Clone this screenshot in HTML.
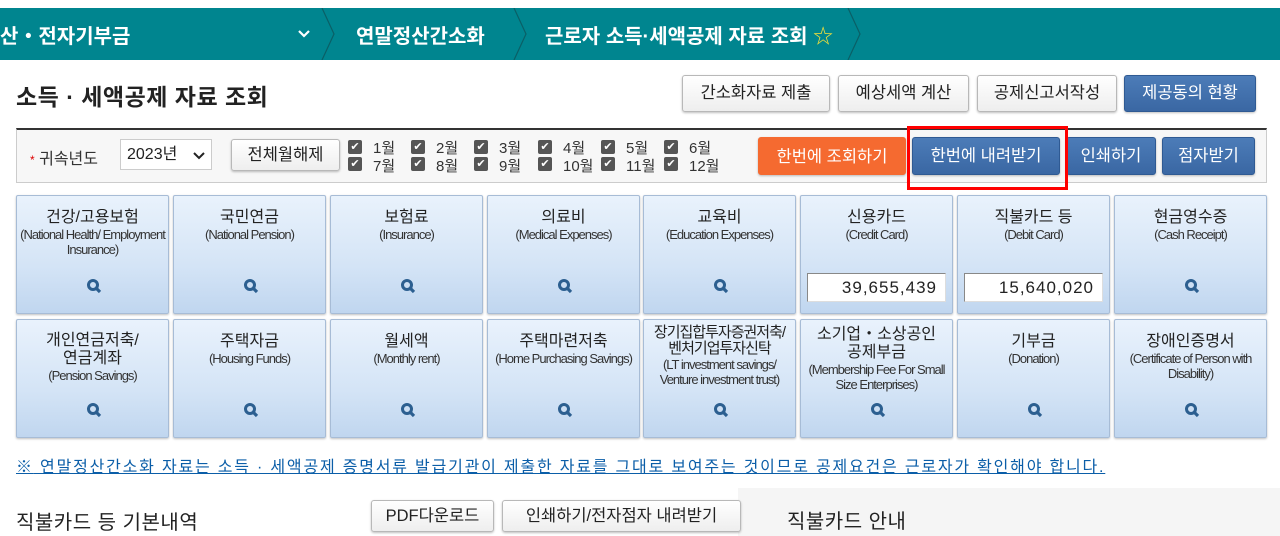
<!DOCTYPE html>
<html><head><meta charset="utf-8"><style>
*{box-sizing:border-box;margin:0;padding:0}
body{width:1280px;height:536px;overflow:hidden;background:#fff;font-family:"Liberation Sans","Noto Sans CJK KR","NanumGothic",sans-serif;color:#222;position:relative}
.a{position:absolute}
.bar{left:0;top:8px;width:1280px;height:52px;background:#00858f}
.bt{color:#fff;font-weight:bold;font-size:20px;top:20px;white-space:nowrap}
.btn{position:absolute;border:1px solid #b8b8b8;border-radius:3px;background:linear-gradient(#fff,#eee);box-shadow:0 1px 2px rgba(0,0,0,.25);font-size:16.5px;text-align:center;white-space:nowrap;color:#222}
.blue{background:linear-gradient(#4c7cb8,#3a67a3);border-color:#2f5a93;color:#fff}
.org{background:#f56a30;border-color:#f56a30;color:#fff}
.tile{position:absolute;width:153px;height:119px;border:1px solid #a7bcd6;border-radius:2px;background:linear-gradient(#e9f2fc,#d4e4f6 60%,#c0d6ef);box-shadow:0 1px 2px rgba(0,0,0,.25);text-align:center}
.tile .k{font-size:16px;color:#222;margin-top:13px;line-height:18px}
.tile .e{font-size:13px;color:#333;letter-spacing:-1px;line-height:15px}
.mag{position:absolute;left:69px;bottom:19px;width:16px;height:16px}
.cb{position:absolute;width:14px;height:14px;background:#555;border-radius:2px;color:#fff;font-size:11px;line-height:14px;text-align:center}
.ml{position:absolute;font-size:15px;color:#333}
.num{position:absolute;left:6px;top:77px;width:139px;height:29px;background:#fff;border:1px solid #888;border-right-color:#ddd;border-bottom-color:#ddd;font-size:17px;text-align:right;padding-right:8px;line-height:27px;letter-spacing:1px}
</style></head><body>
<div class="a bar"></div>
<div class="a bt" style="left:0">산・전자기부금</div>
<svg class="a" style="left:297px;top:29px" width="14" height="10"><path d="M2 2L7 7L12 2" stroke="#fff" stroke-width="2.2" fill="none"/></svg>
<svg class="a" style="left:320px;top:8px" width="20" height="52"><path d="M2 0 L14 26 L2 52" stroke="#0a5f66" fill="none" stroke-width="1.2"/></svg>
<div class="a bt" style="left:356px">연말정산간소화</div>
<svg class="a" style="left:512px;top:8px" width="20" height="52"><path d="M2 0 L14 26 L2 52" stroke="#0a5f66" fill="none" stroke-width="1.2"/></svg>
<div class="a bt" style="left:545px">근로자 소득·세액공제 자료 조회 <span style="color:#f5e13a;font-weight:normal">☆</span></div>
<svg class="a" style="left:846px;top:8px" width="20" height="52"><path d="M2 0 L14 26 L2 52" stroke="#0a5f66" fill="none" stroke-width="1.2"/></svg>

<div class="a" style="left:16px;top:78px;font-size:23px;font-weight:bold;color:#222;letter-spacing:0.5px">소득 · 세액공제 자료 조회</div>
<div class="btn" style="left:682px;top:75px;width:148px;height:37px;line-height:35px">간소화자료 제출</div>
<div class="btn" style="left:838px;top:75px;width:131px;height:37px;line-height:35px">예상세액 계산</div>
<div class="btn" style="left:977px;top:75px;width:140px;height:37px;line-height:35px">공제신고서작성</div>
<div class="btn blue" style="left:1124px;top:75px;width:132px;height:37px;line-height:35px">제공동의 현황</div>

<div class="a" style="left:16px;top:128px;width:1251px;height:55px;background:#f7f7f7;border:1px solid #ccc;border-top:2px solid #333"></div>
<div class="a" style="left:30px;top:145px;font-size:16px;color:#333"><span style="color:#d00;font-size:12px">*</span> 귀속년도</div>
<div class="a" style="left:120px;top:139px;width:92px;height:31px;border:1px solid #ccc;background:#fff;font-size:16px;line-height:29px;padding-left:6px">2023년<svg style="position:absolute;right:6px;top:11px" width="12" height="9"><path d="M1 2L6 7L11 2" stroke="#222" stroke-width="2" fill="none"/></svg></div>
<div class="btn" style="left:231px;top:139px;width:109px;height:32px;line-height:30px">전체월해제</div>
<div class="cb" style="left:348px;top:140px">✔</div><div class="ml" style="left:373px;top:137px">1월</div>
<div class="cb" style="left:348px;top:157px">✔</div><div class="ml" style="left:373px;top:155px">7월</div>
<div class="cb" style="left:411px;top:140px">✔</div><div class="ml" style="left:436px;top:137px">2월</div>
<div class="cb" style="left:411px;top:157px">✔</div><div class="ml" style="left:436px;top:155px">8월</div>
<div class="cb" style="left:474px;top:140px">✔</div><div class="ml" style="left:499px;top:137px">3월</div>
<div class="cb" style="left:474px;top:157px">✔</div><div class="ml" style="left:499px;top:155px">9월</div>
<div class="cb" style="left:538px;top:140px">✔</div><div class="ml" style="left:563px;top:137px">4월</div>
<div class="cb" style="left:538px;top:157px">✔</div><div class="ml" style="left:563px;top:155px">10월</div>
<div class="cb" style="left:601px;top:140px">✔</div><div class="ml" style="left:626px;top:137px">5월</div>
<div class="cb" style="left:601px;top:157px">✔</div><div class="ml" style="left:626px;top:155px">11월</div>
<div class="cb" style="left:664px;top:140px">✔</div><div class="ml" style="left:689px;top:137px">6월</div>
<div class="cb" style="left:664px;top:157px">✔</div><div class="ml" style="left:689px;top:155px">12월</div>
<div class="btn org" style="left:758px;top:137px;width:148px;height:38px;line-height:38px">한번에 조회하기</div>
<div class="btn blue" style="left:912px;top:137px;width:148px;height:38px;line-height:36px">한번에 내려받기</div>
<div class="btn blue" style="left:1066px;top:137px;width:90px;height:38px;line-height:36px">인쇄하기</div>
<div class="btn blue" style="left:1162px;top:137px;width:93px;height:38px;line-height:36px">점자받기</div>
<div class="a" style="left:907px;top:126px;width:161px;height:64px;border:3px solid #f00"></div>

<div class="tile" style="left:16px;top:195px"><div class="k">건강/고용보험</div><div class="e">(National Health/ Employment Insurance)</div><svg class="mag" viewBox="0 0 16 16"><circle cx="7" cy="7" r="4.5" stroke="#2c5f90" stroke-width="3" fill="none"/><path d="M10 10L14 14" stroke="#2c5f90" stroke-width="3.2"/></svg></div>
<div class="tile" style="left:173px;top:195px"><div class="k">국민연금</div><div class="e">(National Pension)</div><svg class="mag" viewBox="0 0 16 16"><circle cx="7" cy="7" r="4.5" stroke="#2c5f90" stroke-width="3" fill="none"/><path d="M10 10L14 14" stroke="#2c5f90" stroke-width="3.2"/></svg></div>
<div class="tile" style="left:330px;top:195px"><div class="k">보험료</div><div class="e">(Insurance)</div><svg class="mag" viewBox="0 0 16 16"><circle cx="7" cy="7" r="4.5" stroke="#2c5f90" stroke-width="3" fill="none"/><path d="M10 10L14 14" stroke="#2c5f90" stroke-width="3.2"/></svg></div>
<div class="tile" style="left:487px;top:195px"><div class="k">의료비</div><div class="e">(Medical Expenses)</div><svg class="mag" viewBox="0 0 16 16"><circle cx="7" cy="7" r="4.5" stroke="#2c5f90" stroke-width="3" fill="none"/><path d="M10 10L14 14" stroke="#2c5f90" stroke-width="3.2"/></svg></div>
<div class="tile" style="left:643px;top:195px"><div class="k">교육비</div><div class="e">(Education Expenses)</div><svg class="mag" viewBox="0 0 16 16"><circle cx="7" cy="7" r="4.5" stroke="#2c5f90" stroke-width="3" fill="none"/><path d="M10 10L14 14" stroke="#2c5f90" stroke-width="3.2"/></svg></div>
<div class="tile" style="left:800px;top:195px"><div class="k">신용카드</div><div class="e">(Credit Card)</div><div class="num">39,655,439</div></div>
<div class="tile" style="left:957px;top:195px"><div class="k">직불카드 등</div><div class="e">(Debit Card)</div><div class="num">15,640,020</div></div>
<div class="tile" style="left:1114px;top:195px"><div class="k">현금영수증</div><div class="e">(Cash Receipt)</div><svg class="mag" viewBox="0 0 16 16"><circle cx="7" cy="7" r="4.5" stroke="#2c5f90" stroke-width="3" fill="none"/><path d="M10 10L14 14" stroke="#2c5f90" stroke-width="3.2"/></svg></div>

<div class="tile" style="left:16px;top:319px"><div class="k" style="margin-top:12px">개인연금저축/<br>연금계좌</div><div class="e">(Pension Savings)</div><svg class="mag" viewBox="0 0 16 16"><circle cx="7" cy="7" r="4.5" stroke="#2c5f90" stroke-width="3" fill="none"/><path d="M10 10L14 14" stroke="#2c5f90" stroke-width="3.2"/></svg></div>
<div class="tile" style="left:173px;top:319px"><div class="k">주택자금</div><div class="e">(Housing Funds)</div><svg class="mag" viewBox="0 0 16 16"><circle cx="7" cy="7" r="4.5" stroke="#2c5f90" stroke-width="3" fill="none"/><path d="M10 10L14 14" stroke="#2c5f90" stroke-width="3.2"/></svg></div>
<div class="tile" style="left:330px;top:319px"><div class="k">월세액</div><div class="e">(Monthly rent)</div><svg class="mag" viewBox="0 0 16 16"><circle cx="7" cy="7" r="4.5" stroke="#2c5f90" stroke-width="3" fill="none"/><path d="M10 10L14 14" stroke="#2c5f90" stroke-width="3.2"/></svg></div>
<div class="tile" style="left:487px;top:319px"><div class="k">주택마련저축</div><div class="e">(Home Purchasing Savings)</div><svg class="mag" viewBox="0 0 16 16"><circle cx="7" cy="7" r="4.5" stroke="#2c5f90" stroke-width="3" fill="none"/><path d="M10 10L14 14" stroke="#2c5f90" stroke-width="3.2"/></svg></div>
<div class="tile" style="left:643px;top:319px"><div class="k" style="margin-top:5px;font-size:15px;letter-spacing:-1px;line-height:16px">장기집합투자증권저축/<br>벤처기업투자신탁</div><div class="e">(LT investment savings/ Venture investment trust)</div><svg class="mag" viewBox="0 0 16 16"><circle cx="7" cy="7" r="4.5" stroke="#2c5f90" stroke-width="3" fill="none"/><path d="M10 10L14 14" stroke="#2c5f90" stroke-width="3.2"/></svg></div>
<div class="tile" style="left:800px;top:319px"><div class="k" style="margin-top:6px">소기업・소상공인<br>공제부금</div><div class="e">(Membership Fee For Small Size Enterprises)</div><svg class="mag" viewBox="0 0 16 16"><circle cx="7" cy="7" r="4.5" stroke="#2c5f90" stroke-width="3" fill="none"/><path d="M10 10L14 14" stroke="#2c5f90" stroke-width="3.2"/></svg></div>
<div class="tile" style="left:957px;top:319px"><div class="k">기부금</div><div class="e">(Donation)</div><svg class="mag" viewBox="0 0 16 16"><circle cx="7" cy="7" r="4.5" stroke="#2c5f90" stroke-width="3" fill="none"/><path d="M10 10L14 14" stroke="#2c5f90" stroke-width="3.2"/></svg></div>
<div class="tile" style="left:1114px;top:319px"><div class="k">장애인증명서</div><div class="e">(Certificate of Person with Disability)</div><svg class="mag" viewBox="0 0 16 16"><circle cx="7" cy="7" r="4.5" stroke="#2c5f90" stroke-width="3" fill="none"/><path d="M10 10L14 14" stroke="#2c5f90" stroke-width="3.2"/></svg></div>

<div class="a" style="left:16px;top:453px;font-size:16px;color:#0b5ea8;text-decoration:underline;white-space:nowrap;letter-spacing:1.8px"><b>※</b> 연말정산간소화 자료는 소득 · 세액공제 증명서류 발급기관이 제출한 자료를 그대로 보여주는 것이므로 공제요건은 근로자가 확인해야 합니다.</div>

<div class="a" style="left:738px;top:488px;width:542px;height:48px;background:#f5f5f5"></div>
<div class="a" style="left:787px;top:505px;font-size:20px;color:#222;letter-spacing:0.5px">직불카드 안내</div>
<div class="a" style="left:16px;top:506px;font-size:20px;color:#222;letter-spacing:0.5px">직불카드 등 기본내역</div>
<div class="btn" style="left:371px;top:500px;width:123px;height:32px;line-height:30px">PDF다운로드</div>
<div class="btn" style="left:502px;top:500px;width:239px;height:32px;line-height:30px">인쇄하기/전자점자 내려받기</div>
</body></html>
